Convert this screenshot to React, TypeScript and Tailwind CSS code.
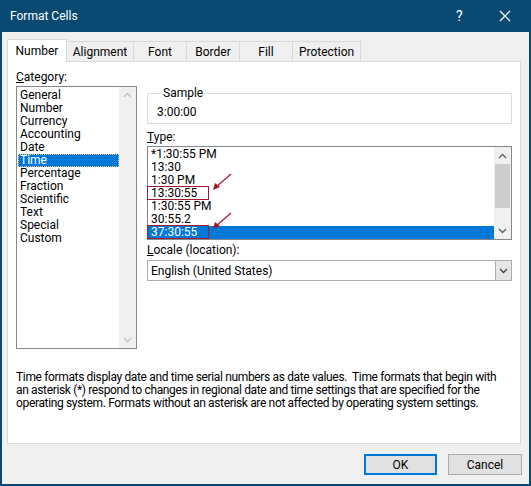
import type { ReactNode } from 'react';

const categories = [
  'General',
  'Number',
  'Currency',
  'Accounting',
  'Date',
  'Time',
  'Percentage',
  'Fraction',
  'Scientific',
  'Text',
  'Special',
  'Custom',
];

const typeFormats = ['*1:30:55 PM', '13:30', '1:30 PM', '13:30:55', '1:30:55 PM', '30:55.2', '37:30:55'];

const tabs = ['Alignment', 'Font', 'Border', 'Fill', 'Protection'];
const tabWidths: Record<string, string> = {
  Alignment: 'w-[68px]',
  Font: 'w-[54px]',
  Border: 'w-[54px]',
  Fill: 'w-[54px]',
  Protection: 'w-[69px]',
};

function Chevron({ up, color = '#606060' }: { up?: boolean; color?: string }) {
  return (
    <svg width="9" height="6" viewBox="0 0 9 6">
      <polyline
        points={up ? '1,5 4.5,1.5 8,5' : '1,1 4.5,4.5 8,1'}
        fill="none"
        stroke={color}
        strokeWidth="1.3"
      />
    </svg>
  );
}

function Label({ hot, rest }: { hot: string; rest: string }) {
  return (
    <div className="h-[14px] leading-[14px]">
      <u>{hot}</u>
      {rest}
    </div>
  );
}

// thin red pointer drawn toward a list row
function Pointer() {
  return (
    <svg width="20" height="18" viewBox="0 0 20 18" className="absolute left-[64px] -top-[14px]">
      <line x1="19" y1="1" x2="4" y2="14" stroke="#A0182F" strokeWidth="1.2" />
      <polygon points="1,17 3,10 8,14" fill="#A0182F" />
    </svg>
  );
}

function Row({ children, selected }: { children: ReactNode; selected?: boolean }) {
  return (
    <div className={`h-[13px] leading-[13px] pl-[3px] ${selected ? 'bg-[#0078D7] text-white' : ''}`}>
      {children}
    </div>
  );
}

export default function App() {
  return (
    <div
      className="w-[531px] h-[486px] flex flex-col bg-[#F0F0F0] border-x-2 border-b-2 border-[#0A4A72] text-[12px] text-black"
      style={{ fontFamily: 'Roboto, "Liberation Sans", Arial, sans-serif' }}
    >
      {/* title bar */}
      <div className="h-[32px] -mx-[2px] bg-[#0A4A72] text-white flex items-center pl-[10px]">
        <span className="flex-1">Format Cells</span>
        <span className="w-[12px] text-[14px] mr-[31px]">?</span>
        <svg width="12" height="12" viewBox="0 0 12 12" className="mr-[20px]">
          <path d="M1 1 L11 11 M11 1 L1 11" stroke="white" strokeWidth="1.2" />
        </svg>
      </div>

      <div className="pl-[5px] pt-[7px] flex flex-col">
        {/* tabs */}
        <div className="flex items-end h-[22px] relative z-10">
          <div className="w-[60px] h-[23px] -mb-px bg-white border border-b-0 border-[#D9D9D9] flex items-center justify-center">
            Number
          </div>
          {tabs.map((t) => (
            <div
              key={t}
              className={`${tabWidths[t]} -ml-px h-[20px] border border-b-0 border-[#D9D9D9] flex items-center justify-center`}
            >
              {t}
            </div>
          ))}
        </div>

        {/* panel */}
        <div className="w-[514px] h-[383px] bg-white border border-[#D9D9D9] px-[8px] flex flex-col">
          <div className="flex gap-[10px]">
            <div className="pt-[8px] flex flex-col gap-[2px]">
              <Label hot="C" rest="ategory:" />
              <div className="w-[121px] h-[263px] border border-[#828790] flex">
                <div className="flex-1 pt-[2px] pl-px">
                  {categories.map((c) =>
                    c === 'Time' ? (
                      <div
                        key={c}
                        className="h-[13px] leading-[11px] pl-px bg-[#0078D7] text-white border border-dotted border-[#F2C069]"
                      >
                        {c}
                      </div>
                    ) : (
                      <div key={c} className="h-[13px] leading-[12px] pl-[2px]">
                        {c}
                      </div>
                    )
                  )}
                </div>
                <div className="w-[17px] bg-[#F0F0F0] flex flex-col justify-between items-center py-[5px]">
                  <Chevron up color="#C0C0C0" />
                  <Chevron color="#C0C0C0" />
                </div>
              </div>
            </div>

            <div className="w-[366px] pt-[24px] flex flex-col">
              <fieldset className="h-[38px] border border-[#DCDCDC] pl-[9px] pt-[5px]">
                <legend className="ml-[5px] px-px leading-[14px]">Sample</legend>
                <div className="leading-[14px]">3:00:00</div>
              </fieldset>

              <div className="mt-[6px] mb-[2px]">
                <Label hot="T" rest="ype:" />
              </div>
              <div className="h-[94px] border border-[#828790] flex">
                <div className="flex-1 pt-px">
                  {typeFormats.map((f, i) => (
                    <div key={f} className="relative">
                      <Row selected={i === 6}>{f}</Row>
                      {(i === 3 || i === 6) && (
                        <>
                          <div className="absolute -left-px -top-px w-[62px] h-[14px] border border-[#9E1B32]" />
                          <Pointer />
                        </>
                      )}
                    </div>
                  ))}
                </div>
                <div className="w-[17px] bg-[#F0F0F0] flex flex-col">
                  <div className="h-[17px] flex items-center justify-center">
                    <Chevron up />
                  </div>
                  <div className="h-[44px] mx-px bg-[#CDCDCD]" />
                  <div className="flex-1" />
                  <div className="h-[17px] flex items-center justify-center">
                    <Chevron />
                  </div>
                </div>
              </div>

              <div className="mt-[3px] mb-[3px]">
                <Label hot="L" rest="ocale (location):" />
              </div>
              <div className="h-[21px] border border-[#ADADAD] flex items-center">
                <span className="flex-1 pl-[3px]">English (United States)</span>
                <div className="w-[16px] h-full bg-[#E5E5E5] border-l border-[#ADADAD] flex items-center justify-center">
                  <Chevron color="#404040" />
                </div>
              </div>
            </div>
          </div>

          <p className="mt-[22px] w-[488px] leading-[13px] tracking-[-0.35px]">
            Time formats display date and time serial numbers as date values.&nbsp; Time formats that begin with an
            asterisk (*) respond to changes in regional date and time settings that are specified for the operating
            system. Formats without an asterisk are not affected by operating system settings.
          </p>
        </div>

        {/* buttons */}
        <div className="flex justify-end gap-[11px] pr-[7px] mt-[10px]">
          <button className="w-[73px] h-[21px] bg-[#E1E1E1] border-2 border-[#0078D7]">OK</button>
          <button className="w-[74px] h-[21px] bg-[#E1E1E1] border border-[#ADADAD]">Cancel</button>
        </div>
      </div>
    </div>
  );
}
